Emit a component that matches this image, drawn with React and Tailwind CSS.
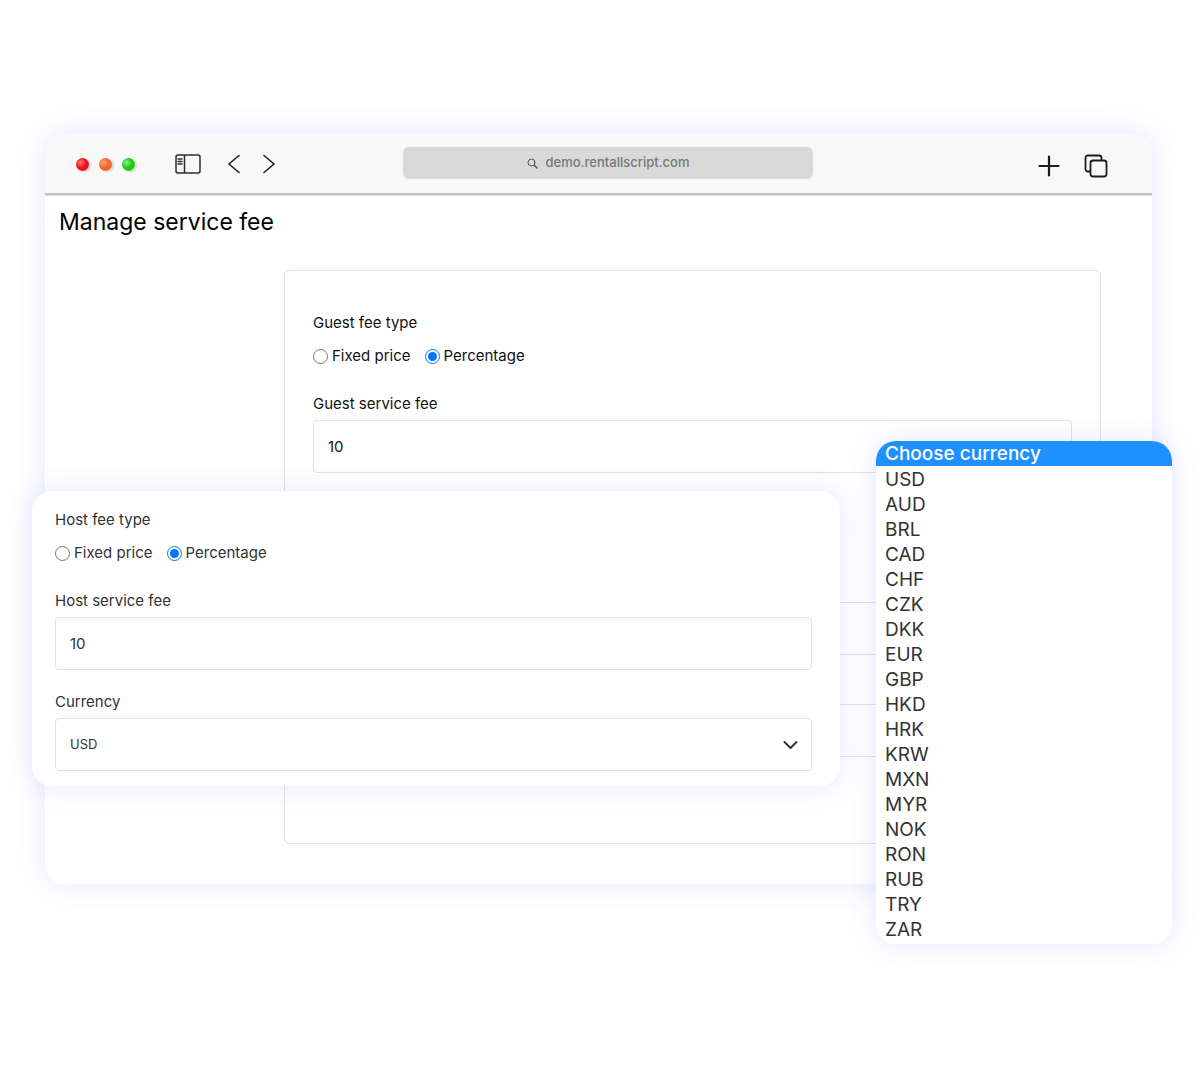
import React, { useState } from "react"

const currencies = [
    "USD", "AUD", "BRL", "CAD", "CHF", "CZK", "DKK", "EUR", "GBP", "HKD",
    "HRK", "KRW", "MXN", "MYR", "NOK", "RON", "RUB", "TRY", "ZAR",
]

const FeeFields = ({ id, title }) => {
    const [feeType, setFeeType] = useState("percentage")
    const [fee, setFee] = useState("10")

    return (
        <div>
            <fieldset>
                <legend className="leading-5">{title} fee type</legend>
                <div className="mt-[13px] flex gap-3.5 leading-5">
                    <label className="flex items-center gap-1">
                        <input
                            type="radio"
                            name={`${id}-type`}
                            checked={feeType === "fixed"}
                            onChange={() => setFeeType("fixed")}
                            className="size-[15px]"
                        />
                        Fixed price
                    </label>
                    <label className="flex items-center gap-1">
                        <input
                            type="radio"
                            name={`${id}-type`}
                            checked={feeType === "percentage"}
                            onChange={() => setFeeType("percentage")}
                            className="size-[15px]"
                        />
                        Percentage
                    </label>
                </div>
            </fieldset>
            <label htmlFor={`${id}-fee`} className="mt-7 block leading-5">{title} service fee</label>
            <input
                id={`${id}-fee`}
                type="text"
                value={fee}
                onChange={(e) => setFee(e.target.value)}
                className="mt-1.5 block h-[53px] w-full rounded-sm border border-[#e2e2e2] px-3.5 outline-none"
            />
        </div>
    )
}

const Toolbar = () => (
    <div className="grid h-[62px] grid-cols-[327fr_410fr_295fr] items-center rounded-t-[20px] border-b-2 border-[#c4c4c4] bg-[#f8f8f8] pr-11 pl-[31px] shadow-[0_1px_1px_#dddddd]">
        <div className="flex items-center pt-0.5">
            <div className="flex gap-2.5">
                <span className="size-[13px] rounded-full bg-radial-[at_35%_35%] from-[#ff6b6b] from-5% to-[#e9141b] to-45% shadow-[2px_1px_2px_#d4d4d4]" />
                <span className="size-[13px] rounded-full bg-radial-[at_35%_35%] from-[#ff9a66] from-5% to-[#f0662a] to-45% shadow-[2px_1px_2px_#d4d4d4]" />
                <span className="size-[13px] rounded-full bg-radial-[at_35%_35%] from-[#7af07a] from-5% to-[#1ccb12] to-45% shadow-[2px_1px_2px_#d4d4d4]" />
            </div>
            <button aria-label="Toggle sidebar" className="ml-10 cursor-pointer">
                <svg width="26" height="20" viewBox="0 0 26 20" fill="none" stroke="#2b2b2b" strokeWidth="1.5">
                    <rect x="1" y="1" width="24" height="18" rx="2" />
                    <path d="M9.5 1v18M2.5 5h5M2.5 7.5h5M2.5 10h5" />
                </svg>
            </button>
            <button aria-label="Back" className="ml-[26px] cursor-pointer">
                <svg width="14" height="20" viewBox="0 0 14 20" fill="none" stroke="#222" strokeWidth="1.6" strokeLinecap="round">
                    <path d="M12 1.5L2 10l10 8.5" />
                </svg>
            </button>
            <button aria-label="Forward" className="ml-[21px] cursor-pointer">
                <svg width="14" height="20" viewBox="0 0 14 20" fill="none" stroke="#222" strokeWidth="1.6" strokeLinecap="round">
                    <path d="M2 1.5L12 10 2 18.5" />
                </svg>
            </button>
        </div>

        <div className="flex h-8 items-center justify-center gap-2 rounded-md bg-[#d9d9d9] text-[13px] font-medium text-[#777]">
            <svg width="11" height="11" viewBox="0 0 11 11" fill="none" stroke="#555" strokeLinecap="round">
                <circle cx="4.5" cy="4.5" r="3.5" />
                <path d="M7.2 7.2L10 10" strokeWidth="1.6" />
            </svg>
            demo.rentallscript.com
        </div>

        <div className="flex items-center justify-end gap-6 pt-1.5">
            <button aria-label="New tab" className="cursor-pointer">
                <svg width="22" height="22" viewBox="0 0 22 22" fill="none" stroke="#1c1c1c" strokeWidth="2.2" strokeLinecap="round">
                    <path d="M11 1.5v19M1.5 11h19" />
                </svg>
            </button>
            <button aria-label="Show tabs" className="cursor-pointer">
                <svg width="24" height="24" viewBox="0 0 24 24" fill="none" stroke="#1c1c1c" strokeWidth="1.8">
                    <path d="M6.5 17.5H4a2.5 2.5 0 0 1-2.5-2.5V4A2.5 2.5 0 0 1 4 1.5h11A2.5 2.5 0 0 1 17.5 4v2.5" />
                    <rect x="6.5" y="6.5" width="16" height="16" rx="2.5" />
                </svg>
            </button>
        </div>
    </div>
)

const App = () => {
    const [currency, setCurrency] = useState("USD")

    return (
        <main className="bg-white pt-[133px] pr-[52px] pb-[193px] pl-[45px] font-[Inter,sans-serif] text-[15px] text-[#111]">
            <div className="relative rounded-[20px] bg-white shadow-[0_0_28px_#5050ff24]">
                <Toolbar />

                <div className="pt-[11px] pr-[51px] pb-10 pl-3.5">
                    <h1 className="text-[23px] leading-8 text-black">Manage service fee</h1>
                    <section className="mt-8 ml-[225px] rounded-md border border-[#e2e2e2] px-7 pt-[42px] pb-[86px]">
                        <FeeFields id="guest" title="Guest" />
                        <div className="mt-[129px] h-[53px] rounded-sm border border-[#e2e2e2]" />
                        <div className="mt-[49px] h-[53px] rounded-sm border border-[#e2e2e2]" />
                    </section>
                </div>

                {/* Host fee card */}
                <section className="absolute top-[358px] -left-[13px] w-[73%] rounded-[20px] bg-white pt-[19px] pr-7 pb-[15px] pl-[23px] text-[#333] shadow-[0_0_28px_#5050ff24]">
                    <FeeFields id="host" title="Host" />
                    <label htmlFor="currency" className="mt-[22px] block leading-5">Currency</label>
                    <div className="relative mt-1.5">
                        <select
                            id="currency"
                            value={currency}
                            onChange={(e) => setCurrency(e.target.value)}
                            className="block h-[53px] w-full appearance-none rounded-sm border border-[#e2e2e2] bg-white px-3.5 text-[13px] outline-none"
                        >
                            {currencies.map((code) => <option key={code}>{code}</option>)}
                        </select>
                        <svg className="pointer-events-none absolute top-[22px] right-3.5" width="15" height="10" viewBox="0 0 15 10" fill="none" stroke="#333" strokeWidth="2" strokeLinecap="round" strokeLinejoin="round">
                            <path d="M1.5 2l6 6 6-6" />
                        </svg>
                    </div>
                </section>

                {/* Open currency menu */}
                <ul className="absolute top-[308px] -right-5 w-[296px] rounded-[20px] bg-white pb-0.5 text-[19px] leading-[25px] text-[#333] shadow-[0_0_28px_#5050ff24]">
                    <li className="mb-px rounded-t-[20px] bg-[#1e90ff] px-[9px] font-medium text-white">Choose currency</li>
                    {currencies.map((code) => (
                        <li key={code}>
                            <button onClick={() => setCurrency(code)} className="block w-full cursor-pointer px-[9px] text-left">
                                {code}
                            </button>
                        </li>
                    ))}
                </ul>
            </div>
        </main>
    )
}

export default App
